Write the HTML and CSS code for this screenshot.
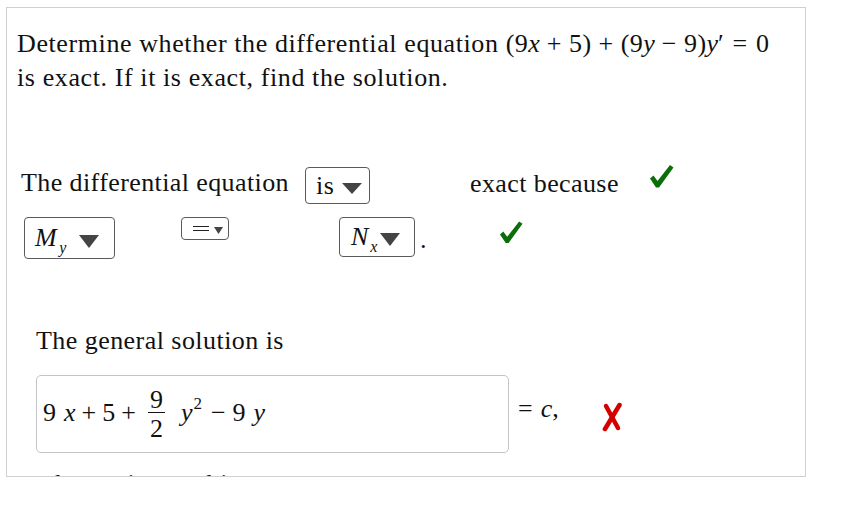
FILE: index.html
```html
<!DOCTYPE html>
<html>
<head>
<meta charset="utf-8">
<link rel="stylesheet" href="styles.css">
</head>
<body>
<div class="frame">
  <p class="problem">Determine whether the differential equation <span class="math">(9<i>x</i><span class="op">+</span>5)<span class="op">+</span>(9<i>y</i><span class="op">−</span>9)<i>y</i>′<span class="rel">=</span>0</span><br>is exact. If it is exact, find the solution.</p>

  <div class="row row1">
    <span class="label l1">The differential equation</span>
    <span class="select sel-is"><span class="opt">is</span><svg class="tri" width="20" height="11" viewBox="0 0 20 11"><polygon points="0,0 20,0 10,11"/></svg></span>
    <span class="label l2">exact because</span>
    <svg class="check c1" width="25" height="25" viewBox="0 0 25 25"><polygon points="1,14.5 4.5,11.5 8.5,17 21,1 24.5,3.5 10,23.5 7,23.5"/></svg>
  </div>

  <div class="row row2">
    <span class="select sel-my"><span class="opt"><i>M</i><sub><i>y</i></sub></span><svg class="tri" width="20" height="13" viewBox="0 0 20 13"><polygon points="0,0 20,0 10,13"/></svg></span>
    <span class="select sel-eq"><span class="eqbar"></span><svg class="tri-s" width="9" height="7" viewBox="0 0 9 7"><polygon points="0,0 9,0 4.5,7"/></svg></span>
    <span class="select sel-nx"><span class="opt"><i>N</i><sub><i>x</i></sub></span><svg class="tri" width="20" height="13" viewBox="0 0 20 13"><polygon points="0,0 20,0 10,13"/></svg></span>
    <span class="dot">.</span>
    <svg class="check c2" width="24" height="25" viewBox="0 0 25 25"><polygon points="1,14.5 4.5,11.5 8.5,17 21,1 24.5,3.5 10,23.5 7,23.5"/></svg>
  </div>

  <p class="gen">The general solution is</p>

  <div class="row row3">
    <div class="answer"><span class="expr">9<span class="sp"></span><i>x</i><span class="op">+</span>5<span class="op">+</span><span class="frac"><span class="num">9</span><span class="bar"></span><span class="den">2</span></span><span class="sp3"></span><i>y</i><sup>2</sup><span class="op op-m">−</span>9<span class="sp"></span><i>y</i></span></div>
    <span class="eqc">=<span class="sp2"></span><i>c</i>,</span>
    <svg class="cross" width="22" height="30" viewBox="0 0 22 30"><line x1="18.5" y1="3" x2="4" y2="27" /><line x1="5" y1="4" x2="17" y2="26" /></svg>
  </div>

  <p class="clipped">where <i>c</i> is an arbitrary constant.</p>
</div>
</body>
</html>
```

FILE: styles.css
```css
html, body {
  margin: 0;
  padding: 0;
  background: #ffffff;
}

body {
  font-family: "Liberation Serif", "Times New Roman", serif;
  color: #111111;
  font-size: 26px;
  letter-spacing: 0.5px;
}

.frame {
  box-sizing: border-box;
  margin: 7px 0 0 6px;
  width: 800px;
  height: 470px;
  border: 1px solid #d0d0d0;
  overflow: hidden;
  font-family: "Liberation Serif", "Times New Roman", serif;
}

.frame span,
.frame div,
.frame p {
  font-family: "Liberation Serif", "Times New Roman", serif;
}

.frame i {
  font-family: "Liberation Serif", "Times New Roman", serif;
  font-style: italic;
  letter-spacing: 0;
}

.problem {
  margin: 19px 0 0 0;
  padding-left: 10px;
  line-height: 34px;
  letter-spacing: 0.6px;
}

.problem .math {
  letter-spacing: 0.45px;
}

.op {
  margin: 0 0.27em;
}

.rel {
  margin: 0 0.32em;
}

.row {
  display: flex;
}

.row1 {
  margin-top: 72px;
  padding-left: 14px;
  height: 37px;
  align-items: center;
}

.label {
  line-height: 34px;
  white-space: nowrap;
  letter-spacing: 0.4px;
}

.l1 {
  width: 284px;
  margin-bottom: 5px;
}

.l2 {
  width: 150px;
  margin-left: 100px;
  margin-bottom: 3px;
}

.select {
  box-sizing: border-box;
  display: inline-flex;
  align-items: center;
  border: 1px solid #5a5a5a;
  border-radius: 4px;
  background: #ffffff;
  flex: none;
}

.tri polygon,
.tri-s polygon {
  fill: #444444;
}

.opt {
  line-height: 26px;
  white-space: nowrap;
}

.sel-is {
  width: 65px;
  height: 37px;
  padding-left: 10px;
}

.sel-is .tri {
  margin-left: 8px;
  margin-top: 5px;
}

.check {
  flex: none;
}

.check polygon {
  fill: #0b6e0b;
}

.c1 {
  margin-left: 29px;
  margin-bottom: 19px;
}

.row2 {
  margin-top: 13px;
  padding-left: 17px;
  height: 42px;
  align-items: flex-start;
}

.sel-my {
  width: 91px;
  height: 42px;
  padding-left: 10px;
}

.sel-my .opt i {
  letter-spacing: 0.5px;
}

.sel-my .tri {
  margin-left: 12px;
  margin-top: 7px;
}

sub {
  font-size: 16px;
  vertical-align: -7px;
  line-height: 0;
  margin-left: 2px;
}

sup {
  font-size: 17px;
  vertical-align: 12px;
  line-height: 0;
  margin-left: 1px;
}

.sel-eq {
  width: 48px;
  height: 23px;
  margin-left: 66px;
  padding-left: 11px;
}

.eqbar {
  display: block;
  width: 16px;
  height: 3px;
  border-top: 1.5px solid #222222;
  border-bottom: 1.5px solid #222222;
  margin-top: -1px;
}

.tri-s {
  margin-left: 5px;
  margin-top: 3px;
}

.sel-nx {
  width: 76px;
  height: 40px;
  margin-left: 110px;
  padding-left: 11px;
}

.sel-nx .tri {
  margin-left: 3px;
  margin-top: 5px;
}

.dot {
  margin-left: 5px;
  line-height: 34px;
  margin-top: 6px;
}

.c2 {
  margin-left: 72px;
  margin-top: 3px;
}

.gen {
  margin: 65px 0 0 0;
  padding-left: 29px;
  line-height: 34px;
  letter-spacing: 0.45px;
}

.row3 {
  margin-top: 17px;
  padding-left: 29px;
  height: 78px;
  align-items: center;
}

.answer {
  box-sizing: border-box;
  width: 473px;
  height: 78px;
  border: 1px solid #c4c4c4;
  border-radius: 5px;
  padding-left: 6px;
  display: flex;
  align-items: center;
  flex: none;
}

.expr {
  line-height: 34px;
  white-space: nowrap;
  letter-spacing: 0;
}

.expr .op {
  margin: 0 6px;
}

.expr .op-m {
  margin: 0 7px 0 9px;
}

.sp {
  display: inline-block;
  width: 8px;
}

.sp3 {
  display: inline-block;
  width: 14px;
}

.sp2 {
  display: inline-block;
  width: 8px;
}

.frac {
  display: inline-flex;
  flex-direction: column;
  align-items: center;
  vertical-align: 13px;
  margin: 0 2px 0 6px;
}

.num,
.den {
  line-height: 20px;
  padding: 0 2px;
}

.bar {
  align-self: stretch;
  height: 0;
  border-top: 1px solid #111111;
  margin: 2px 0 6px 0;
}

.eqc {
  margin-left: 9px;
  line-height: 34px;
  margin-bottom: 10px;
  white-space: nowrap;
  letter-spacing: 0;
}

.cross {
  margin-left: 42px;
  margin-top: 6px;
  flex: none;
}

.cross line {
  stroke: #d40000;
  stroke-width: 4.5;
  stroke-linecap: round;
}

.clipped {
  margin: 14px 0 0 0;
  padding-left: 29px;
  line-height: 34px;
}
```
